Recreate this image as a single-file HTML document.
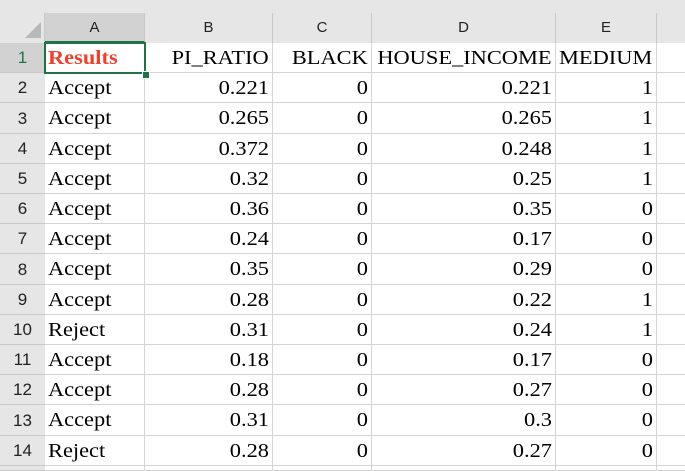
<!DOCTYPE html><html><head><style>
html,body{margin:0;width:685px;height:471px;overflow:hidden}
body{background:#e6e6e6;position:relative;font-family:"Liberation Serif",serif}
.hd{position:absolute;top:13px;height:30px;border-right:1px solid #c8c8c8;background:#e6e6e6;font:15px "Liberation Sans",sans-serif;color:#222;text-align:center;line-height:30px;box-sizing:border-box}
.rh{position:absolute;left:0;width:45px;border-bottom:1px solid #c8c8c8;font:17px "Liberation Sans",sans-serif;color:#222;text-align:center;box-sizing:border-box;background:#e6e6e6}
.c{position:absolute;border-right:1px solid #d4d4d4;border-bottom:1px solid #d4d4d4;background:#fff;box-sizing:border-box;font-size:20px;padding:0 3px;white-space:nowrap;color:#000;overflow:visible}
.c span{display:inline-block;transform:scaleX(1.12);transform-origin:left center}
.r{text-align:right}
.r span{transform-origin:right center}
</style></head><body>
<div style="position:absolute;left:0;top:13px;width:45px;height:30px;border-right:1px solid #c8c8c8;box-sizing:border-box"></div>
<div style="position:absolute;left:25px;top:22px;width:0;height:0;border-left:16px solid transparent;border-bottom:16px solid #b8b8b8"></div>
<div class="hd" style="left:45px;width:100px;background:#d2d2d2;border-bottom:2px solid #217346">A</div>
<div class="hd" style="left:145px;width:128px">B</div>
<div class="hd" style="left:273px;width:99px">C</div>
<div class="hd" style="left:372px;width:184px">D</div>
<div class="hd" style="left:556px;width:101px">E</div>
<div class="hd" style="left:657px;width:40px"></div>
<div id="g"></div>
<script>
var d=[["Results","PI_RATIO","BLACK","HOUSE_INCOME","MEDIUM"],
["Accept","0.221","0","0.221","1"],["Accept","0.265","0","0.265","1"],["Accept","0.372","0","0.248","1"],["Accept","0.32","0","0.25","1"],["Accept","0.36","0","0.35","0"],["Accept","0.24","0","0.17","0"],["Accept","0.35","0","0.29","0"],["Accept","0.28","0","0.22","1"],["Reject","0.31","0","0.24","1"],["Accept","0.18","0","0.17","0"],["Accept","0.28","0","0.27","0"],["Accept","0.31","0","0.3","0"],["Reject","0.28","0","0.27","0"],["","","","",""]];
var L=[45,145,273,372,556,657],W=[100,128,99,184,101,40],h="";
for(var i=0;i<d.length;i++){var t=43+Math.round(i*30.2),hh=43+Math.round((i+1)*30.2)-t;
var lh=hh; if(i==14)hh=471-t;
var hs="height:"+hh+"px;line-height:"+lh+"px;";
h+='<div class="rh" style="top:'+t+'px;'+hs+(i==0?'background:#d2d2d2;color:#217346':'')+'">'+(i<14?i+1:'')+'</div>';
for(var j=0;j<6;j++){var v=j<5?d[i][j]:"";var cls="c"+(j>0?" r":"");var st="left:"+L[j]+"px;top:"+t+"px;width:"+W[j]+"px;"+hs;
if(i==0&&j==0)st+="color:#e8432e;font-weight:bold;";
if(i==0&&j==4)cls="c";
h+='<div class="'+cls+'" style="'+st+'"><span>'+v+'</span></div>';}}
h+='<div style="position:absolute;left:44px;top:42px;width:102px;height:32px;border:2px solid #217346;box-sizing:border-box"></div><div style="position:absolute;left:142px;top:71px;width:6px;height:6px;background:#217346;border:1px solid #fff"></div>';
document.getElementById("g").innerHTML=h;
</script>
</body></html>
